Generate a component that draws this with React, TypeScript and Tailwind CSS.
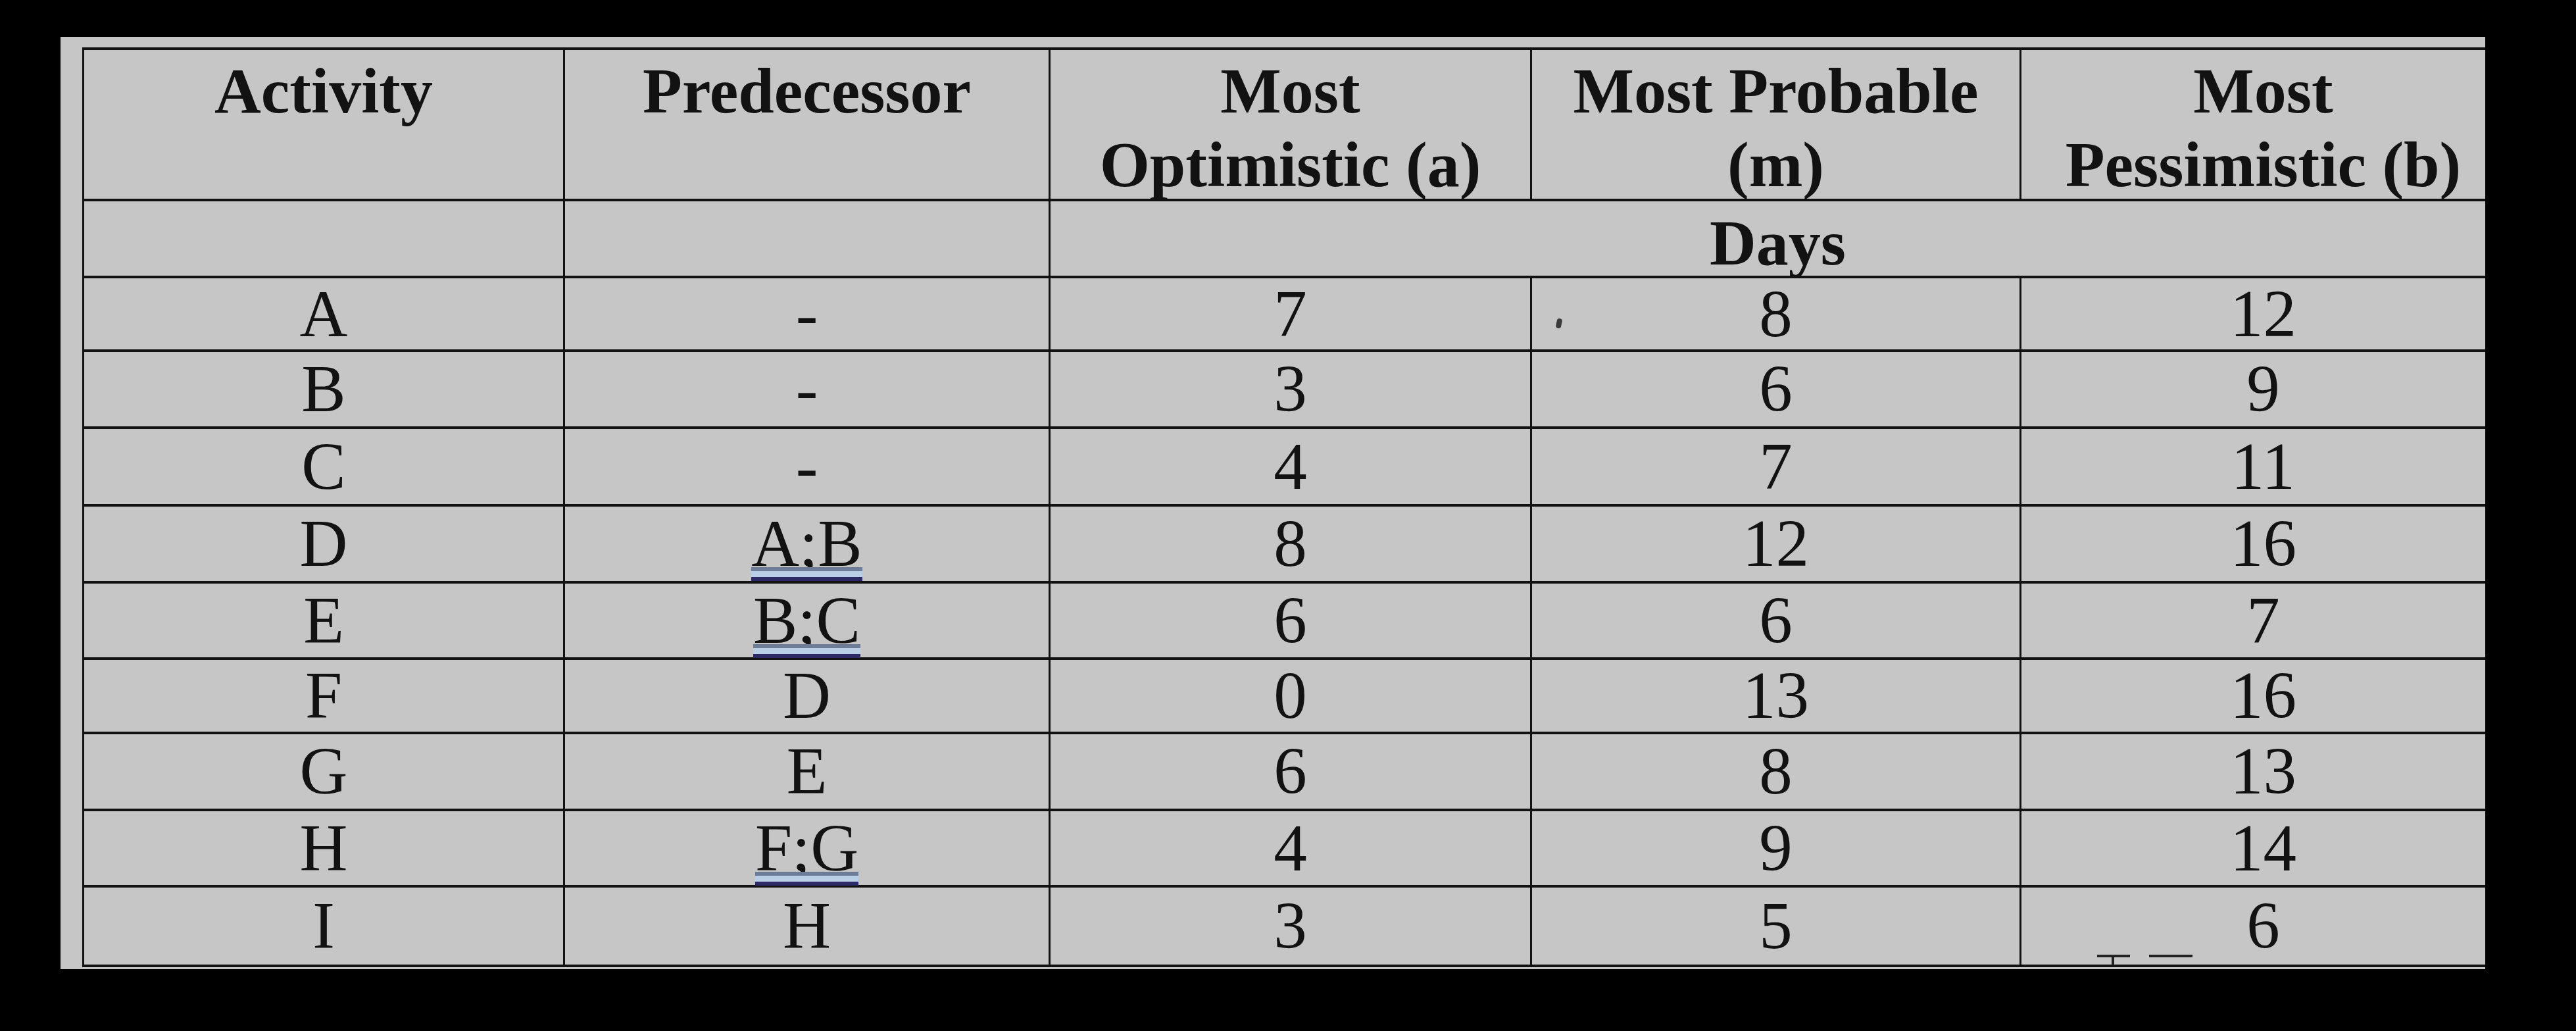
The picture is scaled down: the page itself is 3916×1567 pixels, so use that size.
import React from "react";

type Row = {
  act: string;
  pred: string;
  a: string;
  m: string;
  b: string;
  h: string;
  u?: boolean;
};

const rows: Row[] = [
  { act: "A", pred: "-", a: "7", m: "8", b: "12", h: "h-[112px]" },
  { act: "B", pred: "-", a: "3", m: "6", b: "9", h: "h-[117px]" },
  { act: "C", pred: "-", a: "4", m: "7", b: "11", h: "h-[118px]" },
  { act: "D", pred: "A;B", a: "8", m: "12", b: "16", h: "h-[117px]", u: true },
  { act: "E", pred: "B;C", a: "6", m: "6", b: "7", h: "h-[116px]", u: true },
  { act: "F", pred: "D", a: "0", m: "13", b: "16", h: "h-[113px]" },
  { act: "G", pred: "E", a: "6", m: "8", b: "13", h: "h-[117px]" },
  { act: "H", pred: "F;G", a: "4", m: "9", b: "14", h: "h-[116px]", u: true },
  { act: "I", pred: "H", a: "3", m: "5", b: "6", h: "h-[121px]" },
];

const cell =
  "shrink-0 border-r-[3px] border-b-4 border-[#121212] flex justify-center";

function Pred({ text, u }: { text: string; u?: boolean }) {
  if (!u) return <span>{text}</span>;
  return (
    <span className="relative">
      {text}
      <span className="absolute left-0 right-0 top-[86px] h-[21px] border-t-[6px] border-t-[#6e7d97] border-b-[6px] border-b-[#2c2b68] bg-[#b8cfe6]" />
    </span>
  );
}

export default function App() {
  return (
    <div className="w-[3916px] h-[1567px] bg-black overflow-hidden pt-[56px] pl-[92px] font-['Liberation_Serif','Times_New_Roman',serif] text-[#121212]">
      <div className="relative w-[3686px] h-[1417px] bg-[#c6c6c6] overflow-hidden pt-[16px] pl-[33px]">
        <div className="w-[3800px] border-l-[3px] border-t-4 border-[#121212]">
          {/* Header */}
          <div className="flex h-[230px] text-[98px] font-bold leading-[112px] text-center">
            <div className={`${cell} w-[731px] pt-[6px]`}>Activity</div>
            <div className={`${cell} w-[738px] pt-[6px]`}>Predecessor</div>
            <div className={`${cell} w-[732px] pt-[6px]`}>
              Most
              <br />
              Optimistic (a)
            </div>
            <div className={`${cell} w-[744px] pt-[6px]`}>
              Most Probable
              <br />
              (m)
            </div>
            <div className={`${cell} w-[738px] pt-[6px]`}>
              Most
              <br />
              Pessimistic (b)
            </div>
          </div>
          {/* Days */}
          <div className="flex h-[117px] text-[98px] font-bold leading-none">
            <div className={`${cell} w-[731px]`} />
            <div className={`${cell} w-[738px]`} />
            <div className={`${cell} w-[2214px] items-center pt-[12px]`}>Days</div>
          </div>
          {/* Body */}
          {rows.map((r) => (
            <div key={r.act} className={`flex ${r.h} text-[101px] leading-none`}>
              <div className={`${cell} w-[731px] items-center`}>{r.act}</div>
              <div className={`${cell} w-[738px] items-center`}>
                <Pred text={r.pred} u={r.u} />
              </div>
              <div className={`${cell} w-[732px] items-center`}>{r.a}</div>
              <div className={`${cell} w-[744px] items-center`}>{r.m}</div>
              <div className={`${cell} w-[738px] items-center`}>{r.b}</div>
            </div>
          ))}
        </div>

        {/* speck */}
        <div className="absolute left-[2274px] top-[428px] w-[8px] h-[15px] rounded-full bg-[#3a3a3a] rotate-12" />
        {/* marks near bottom */}
        <div className="absolute left-[3096px] top-[1395px] w-[50px] h-[4px] bg-[#222]" />
        <div className="absolute left-[3118px] top-[1395px] w-[4px] h-[16px] bg-[#222]" />
        <div className="absolute left-[3175px] top-[1395px] w-[66px] h-[4px] bg-[#222]" />
      </div>
    </div>
  );
}
